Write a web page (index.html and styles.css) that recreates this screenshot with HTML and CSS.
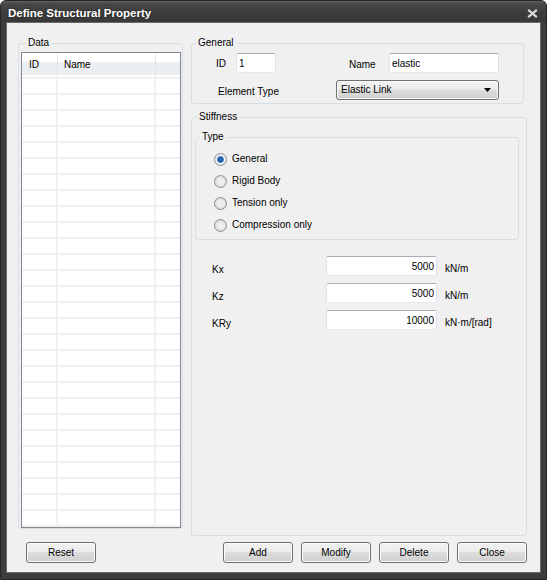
FILE: index.html
```html
<!DOCTYPE html>
<html>
<head>
<meta charset="utf-8">
<title>Define Structural Property</title>
<link rel="stylesheet" href="styles.css">
</head>
<body>
<div class="window">
  <div class="titlebar">
    <span class="title">Define Structural Property</span>
    <svg class="close" width="11" height="9" viewBox="0 0 11 9"><path d="M1.2 0.8 L9.8 8.2 M9.8 0.8 L1.2 8.2" stroke="#d6d6d6" stroke-width="2.2" fill="none"/></svg>
  </div>
  <div class="client">
    <div class="main">
      <fieldset class="group data">
        <legend>Data</legend>
        <div class="list">
          <div class="list-head"><div class="c1">ID</div><div class="c2">Name</div><div class="c3"></div></div>
          <div class="list-row"><div class="c1"></div><div class="c2"></div><div class="c3"></div></div>
          <div class="list-row"><div class="c1"></div><div class="c2"></div><div class="c3"></div></div>
          <div class="list-row"><div class="c1"></div><div class="c2"></div><div class="c3"></div></div>
          <div class="list-row"><div class="c1"></div><div class="c2"></div><div class="c3"></div></div>
          <div class="list-row"><div class="c1"></div><div class="c2"></div><div class="c3"></div></div>
          <div class="list-row"><div class="c1"></div><div class="c2"></div><div class="c3"></div></div>
          <div class="list-row"><div class="c1"></div><div class="c2"></div><div class="c3"></div></div>
          <div class="list-row"><div class="c1"></div><div class="c2"></div><div class="c3"></div></div>
          <div class="list-row"><div class="c1"></div><div class="c2"></div><div class="c3"></div></div>
          <div class="list-row"><div class="c1"></div><div class="c2"></div><div class="c3"></div></div>
          <div class="list-row"><div class="c1"></div><div class="c2"></div><div class="c3"></div></div>
          <div class="list-row"><div class="c1"></div><div class="c2"></div><div class="c3"></div></div>
          <div class="list-row"><div class="c1"></div><div class="c2"></div><div class="c3"></div></div>
          <div class="list-row"><div class="c1"></div><div class="c2"></div><div class="c3"></div></div>
          <div class="list-row"><div class="c1"></div><div class="c2"></div><div class="c3"></div></div>
          <div class="list-row"><div class="c1"></div><div class="c2"></div><div class="c3"></div></div>
          <div class="list-row"><div class="c1"></div><div class="c2"></div><div class="c3"></div></div>
          <div class="list-row"><div class="c1"></div><div class="c2"></div><div class="c3"></div></div>
          <div class="list-row"><div class="c1"></div><div class="c2"></div><div class="c3"></div></div>
          <div class="list-row"><div class="c1"></div><div class="c2"></div><div class="c3"></div></div>
          <div class="list-row"><div class="c1"></div><div class="c2"></div><div class="c3"></div></div>
          <div class="list-row"><div class="c1"></div><div class="c2"></div><div class="c3"></div></div>
          <div class="list-row"><div class="c1"></div><div class="c2"></div><div class="c3"></div></div>
          <div class="list-row"><div class="c1"></div><div class="c2"></div><div class="c3"></div></div>
          <div class="list-row"><div class="c1"></div><div class="c2"></div><div class="c3"></div></div>
          <div class="list-row"><div class="c1"></div><div class="c2"></div><div class="c3"></div></div>
          <div class="list-row"><div class="c1"></div><div class="c2"></div><div class="c3"></div></div>
          <div class="list-row"><div class="c1"></div><div class="c2"></div><div class="c3"></div></div>
          <div class="list-row"><div class="c1"></div><div class="c2"></div><div class="c3"></div></div>
        </div>
      </fieldset>
      <div class="side">
        <fieldset class="group general">
          <legend>General</legend>
          <div class="gen-row">
            <span class="lbl lbl-id">ID</span>
            <input class="field id-field" type="text" value="1">
            <span class="lbl lbl-name">Name</span>
            <input class="field name-field" type="text" value="elastic">
          </div>
          <div class="gen-row second">
            <span class="lbl lbl-type">Element Type</span>
            <div class="combo"><span>Elastic Link</span><svg width="7" height="4" viewBox="0 0 7 4"><path d="M0 0 H7 L3.5 4 Z" fill="#000"/></svg></div>
          </div>
        </fieldset>
        <fieldset class="group stiffness">
          <legend>Stiffness</legend>
          <fieldset class="group type">
            <legend>Type</legend>
            <div class="radios">
              <label class="radio-row"><input class="radio" type="radio" name="t" checked><span>General</span></label>
              <label class="radio-row"><input class="radio" type="radio" name="t"><span>Rigid Body</span></label>
              <label class="radio-row"><input class="radio" type="radio" name="t"><span>Tension only</span></label>
              <label class="radio-row"><input class="radio" type="radio" name="t"><span>Compression only</span></label>
            </div>
          </fieldset>
          <div class="k-grid">
            <span class="k-lbl">Kx</span><input class="field num" type="text" value="5000"><span class="unit">kN/m</span>
            <span class="k-lbl">Kz</span><input class="field num" type="text" value="5000"><span class="unit">kN/m</span>
            <span class="k-lbl">KRy</span><input class="field num" type="text" value="10000"><span class="unit">kN·m/[rad]</span>
          </div>
        </fieldset>
      </div>
    </div>
    <div class="actions">
      <button class="btn">Reset</button>
      <div class="right">
        <button class="btn">Add</button>
        <button class="btn">Modify</button>
        <button class="btn">Delete</button>
        <button class="btn">Close</button>
      </div>
    </div>
  </div>
</div>
</body>
</html>
```
FILE: styles.css
```css
* { box-sizing: border-box; }
body {
  margin: 0;
  background: #ffffff;
  font-family: "Liberation Sans", Arial, sans-serif;
  font-size: 10px;
  color: #000;
}
.window {
  width: 547px;
  height: 580px;
  display: flex;
  flex-direction: column;
  padding: 0 5px 6px 5px;
  border: 1px solid #262626;
  border-radius: 6px 6px 0 0;
  overflow: hidden;
  background: #3d3d3d;
}
.titlebar {
  height: 21px;
  flex: none;
  display: flex;
  align-items: flex-start;
  justify-content: space-between;
  margin: 0 -5px;
  padding: 5px 8px 0 7px;
  background: linear-gradient(#5c5c5c 0, #484848 3px, #3c3c3c 12px, #383838 21px);
}
.title {
  font-size: 11.5px;
  line-height: 14px;
  font-weight: bold;
  color: #ffffff;
  text-shadow: 0 0 2px rgba(0,0,0,0.5);
}
.close { margin-top: 3px; }
.client {
  flex: 1;
  background: #f0f0f0;
  border: 1px solid #6a6a6a;
  padding: 14px 13px 0 11px;
}
.main {
  display: flex;
  align-items: flex-start;
}
.group {
  margin: 0;
  border: 1px solid #d5dfe5;
  border-radius: 3px;
  min-width: 0;
}
.group legend {
  font-size: 10px;
  line-height: 12px;
  padding: 0 2px;
}
.data {
  width: 166px;
  height: 492px;
  padding: 0 1px 0 2px;
}
.data legend { margin-left: 5px; }
.list {
  margin-top: 3px;
  width: 160px;
  height: 476px;
  border: 1px solid #828790;
  background: #ffffff;
  overflow: hidden;
}
.list-head, .list-row {
  display: grid;
  grid-template-columns: 36px 98px 24px;
}
.list-head {
  height: 24px;
  background: linear-gradient(#ffffff 0, #ffffff 9px, #eceff2 9px, #eceff2 22px, #ffffff 22px);
}
.list-head > div {
  line-height: 24px;
  padding-left: 6px;
}
.list-head .c1 { padding-left: 7px; border-right: 1px solid #e0e4e8; }
.list-head .c2 { border-right: 1px solid #e0e4e8; }
.list-row {
  height: 16px;
  border-top: 2px solid #f0f0f0;
}
.list-row .c1, .list-row .c2 { border-right: 2px solid #f0f0f0; }

.side {
  margin-left: 8px;
  display: flex;
  flex-direction: column;
  gap: 7px;
}
.general {
  width: 333px;
  height: 67px;
  padding: 4px 0 0 0;
}
.general legend { margin-left: 4px; }
.gen-row {
  display: flex;
  align-items: flex-start;
  height: 20px;
}
.gen-row.second { margin-top: 7px; }
.lbl { line-height: 12px; }
.lbl-id { margin-left: 24px; width: 20px; margin-top: 5px; }
.lbl-name { margin-left: 73px; width: 40px; margin-top: 6px; }
.lbl-type { margin-left: 26px; width: 118px; margin-top: 6px; }
.field {
  height: 20px;
  margin: 0;
  border: 1px solid;
  border-color: #abadb3 #dbdfe6 #e3e9ef #e2e3ea;
  border-radius: 2px;
  background: #ffffff;
  font-family: "Liberation Sans", Arial, sans-serif;
  font-size: 10px;
  color: #000;
  padding: 0 2px;
  outline: none;
}
.id-field { width: 40px; }
.name-field { width: 110px; }
.num { text-align: right; width: 111px; }
.combo {
  width: 163px;
  height: 20px;
  display: flex;
  align-items: center;
  justify-content: space-between;
  padding: 0 7px 0 4px;
  border: 1px solid #707070;
  border-radius: 3px;
  background: linear-gradient(#f2f2f2 0%, #ebebeb 50%, #dddddd 50%, #cfcfcf 100%);
  box-shadow: inset 0 0 0 1px #fafafa;
  line-height: 12px;
}
.stiffness {
  width: 336px;
  height: 425px;
  padding: 8px 0 0 3px;
}
.stiffness legend { margin-left: 2px; }
.type {
  width: 324px;
  height: 109px;
  padding: 0;
}
.type legend { margin-left: 4px; }
.radios {
  padding: 5px 0 0 18px;
}
.radio-row {
  display: flex;
  align-items: center;
  gap: 5px;
  height: 22px;
  line-height: 12px;
}
.radio {
  -webkit-appearance: none;
  appearance: none;
  width: 13px;
  height: 13px;
  margin: 0;
  border: 1px solid #8f9090;
  border-radius: 50%;
  background: radial-gradient(circle at 50% 50%, #f4f4f4 0, #ececec 3px, #d6d8da 6px);
}
.radio:checked {
  background: radial-gradient(circle at 50% 50%, #3b7fd0 0, #1c4f95 2.2px, #5fa2e4 3.2px, #f4f6f8 3.9px, #e6e8ea 5px, #d6d8da 6px);
}
.k-grid {
  display: grid;
  grid-template-columns: 114px 111px auto;
  row-gap: 7px;
  margin-top: 16px;
  padding-left: 17px;
  align-items: start;
}
.k-lbl { line-height: 12px; padding-top: 8px; }
.unit { line-height: 12px; padding-top: 7px; margin-left: 8px; }
.actions {
  display: flex;
  margin-top: 6px;
}
.actions .right {
  display: flex;
  gap: 8px;
  margin-left: auto;
}
.btn {
  width: 70px;
  height: 21px;
  margin: 0;
  padding: 0;
  border: 1px solid #707070;
  border-radius: 3px;
  background: linear-gradient(#f2f2f2 0%, #ebebeb 50%, #dddddd 50%, #cfcfcf 100%);
  box-shadow: inset 0 0 0 1px #fbfbfb;
  font-family: "Liberation Sans", Arial, sans-serif;
  font-size: 10px;
  line-height: 12px;
  color: #000;
}
.actions > .btn { margin-left: 8px; }
```
